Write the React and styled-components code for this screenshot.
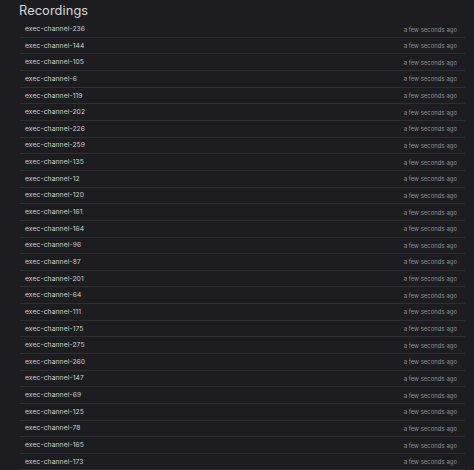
import styled, { createGlobalStyle } from 'styled-components';

const GlobalStyle = createGlobalStyle`
  html, body {
    margin: 0;
    padding: 0;
    background-color: #1d1d21;
    overflow: hidden;
  }
  body {
    font-family: Inter, "Noto Sans", sans-serif;
  }
`;

const Page = styled.div`
  padding: 0 9px 0 19px;
  height: 470px;
  box-sizing: border-box;
`;

const Title = styled.h1`
  margin: 0;
  height: 21.2px;
  line-height: 21px;
  font-size: 12.8px;
  font-weight: 400;
  color: #d6d6d8;
  letter-spacing: 0.1px;
`;

const List = styled.ul`
  list-style: none;
  margin: 0 0 0 1px;
  padding: 0;
`;

const Row = styled.li`
  display: flex;
  align-items: center;
  justify-content: space-between;
  height: 16.65px;
  box-sizing: border-box;
  padding: 0 8px 0 5px;
  border-bottom: 1px solid #2d2d32;
`;

const Name = styled.span`
  font-size: 6.7px;
  color: #cfcfd2;
  letter-spacing: 0.12px;
`;

const Time = styled.span`
  font-size: 5.9px;
  color: #8e8e94;
  letter-spacing: 0.05px;
`;

const channels = [236, 144, 105, 6, 119, 202, 226, 259, 135, 12, 120, 161, 164, 96, 87, 201, 64, 111, 175, 275, 260, 147, 69, 125, 78, 165, 173];

export default function App() {
  return (
    <>
      <GlobalStyle />
      <Page>
        <Title>Recordings</Title>
        <List>
          {channels.map((id) => (
            <Row key={id}>
              <Name>exec-channel-{id}</Name>
              <Time>a few seconds ago</Time>
            </Row>
          ))}
        </List>
      </Page>
    </>
  );
}
